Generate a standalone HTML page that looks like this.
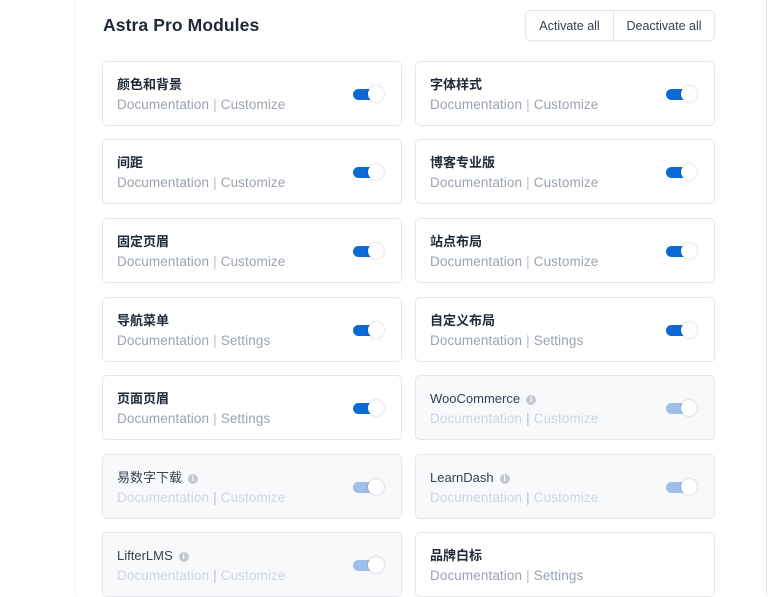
<!DOCTYPE html>
<html><head><meta charset="utf-8"><style>
*{margin:0;padding:0;box-sizing:border-box}
body{width:768px;height:596px;overflow:hidden;background:#fff;font-family:"Liberation Sans","Noto Sans CJK SC",sans-serif;position:relative}
.vl{position:absolute;left:75px;top:0;width:1px;height:596px;background:#f1f2f4}
.rl{position:absolute;left:766px;top:0;width:1px;height:596px;background:#dde9f0}
h1{position:absolute;left:103px;top:14px;font-size:17.5px;line-height:22px;font-weight:bold;color:#1f2937;letter-spacing:.1px}
.btns{position:absolute;left:525px;top:10px;width:190px;height:31px;border:1px solid #e3e6ea;border-radius:5px;display:flex;font-size:12.5px;color:#374151;box-shadow:0 1px 2px rgba(0,0,0,.04)}
.btns div{display:flex;align-items:center;justify-content:center}
.btns .a{width:88px;border-right:1px solid #e3e6ea}
.btns .d{flex:1}
.card{position:absolute;width:300px;height:65px;border:1px solid #e5e7eb;border-radius:5px;background:#fff}
.card .t{position:absolute;left:14px;top:14px;font-size:13px;line-height:18px;color:#1f2937;font-weight:bold}
.card .l{position:absolute;left:14px;top:34px;font-size:13.5px;line-height:18px;color:#9aa3b0;letter-spacing:.1px}
.card .l span{color:#b9bfc8;margin:0 4px}
.tg{position:absolute;left:250px;top:24px;width:31px;height:16px}
.tg .tr{position:absolute;left:0;top:3px;width:26px;height:11px;border-radius:6px;background:#0b6ad6}
.tg .k{position:absolute;left:15px;top:0;width:16px;height:16px;border-radius:50%;background:#fff;box-shadow:0 0 2px rgba(0,0,0,.25)}
.dis{background:#f8f9fb}
.dis .t{color:#374151;font-weight:normal}
.dis .l{color:#d0d5dc}
.dis .tr{background:#9dbfea}
.i{display:inline-block;width:10px;height:10px;border-radius:50%;background:#c4c8ce;color:#fff;font-size:8px;line-height:10px;text-align:center;font-weight:bold;margin-left:6px;vertical-align:1px}
</style></head><body>
<div class="vl"></div><div class="rl"></div>
<h1>Astra Pro Modules</h1>
<div class="btns"><div class="a">Activate all</div><div class="d">Deactivate all</div></div>

<div class="card" style="left:102px;top:61px"><div class="t">颜色和背景</div><div class="l">Documentation<span>|</span>Customize</div><div class="tg"><div class="tr"></div><div class="k"></div></div></div>
<div class="card" style="left:415px;top:61px"><div class="t">字体样式</div><div class="l">Documentation<span>|</span>Customize</div><div class="tg"><div class="tr"></div><div class="k"></div></div></div>

<div class="card" style="left:102px;top:139px"><div class="t">间距</div><div class="l">Documentation<span>|</span>Customize</div><div class="tg"><div class="tr"></div><div class="k"></div></div></div>
<div class="card" style="left:415px;top:139px"><div class="t">博客专业版</div><div class="l">Documentation<span>|</span>Customize</div><div class="tg"><div class="tr"></div><div class="k"></div></div></div>

<div class="card" style="left:102px;top:218px"><div class="t">固定页眉</div><div class="l">Documentation<span>|</span>Customize</div><div class="tg"><div class="tr"></div><div class="k"></div></div></div>
<div class="card" style="left:415px;top:218px"><div class="t">站点布局</div><div class="l">Documentation<span>|</span>Customize</div><div class="tg"><div class="tr"></div><div class="k"></div></div></div>

<div class="card" style="left:102px;top:297px"><div class="t">导航菜单</div><div class="l">Documentation<span>|</span>Settings</div><div class="tg"><div class="tr"></div><div class="k"></div></div></div>
<div class="card" style="left:415px;top:297px"><div class="t">自定义布局</div><div class="l">Documentation<span>|</span>Settings</div><div class="tg"><div class="tr"></div><div class="k"></div></div></div>

<div class="card" style="left:102px;top:375px"><div class="t">页面页眉</div><div class="l">Documentation<span>|</span>Settings</div><div class="tg"><div class="tr"></div><div class="k"></div></div></div>
<div class="card dis" style="left:415px;top:375px"><div class="t">WooCommerce<span class="i">i</span></div><div class="l">Documentation<span>|</span>Customize</div><div class="tg"><div class="tr"></div><div class="k"></div></div></div>

<div class="card dis" style="left:102px;top:454px"><div class="t">易数字下载<span class="i">i</span></div><div class="l">Documentation<span>|</span>Customize</div><div class="tg"><div class="tr"></div><div class="k"></div></div></div>
<div class="card dis" style="left:415px;top:454px"><div class="t">LearnDash<span class="i">i</span></div><div class="l">Documentation<span>|</span>Customize</div><div class="tg"><div class="tr"></div><div class="k"></div></div></div>

<div class="card dis" style="left:102px;top:532px"><div class="t">LifterLMS<span class="i">i</span></div><div class="l">Documentation<span>|</span>Customize</div><div class="tg"><div class="tr"></div><div class="k"></div></div></div>
<div class="card" style="left:415px;top:532px"><div class="t">品牌白标</div><div class="l">Documentation<span>|</span>Settings</div></div>
</body></html>
